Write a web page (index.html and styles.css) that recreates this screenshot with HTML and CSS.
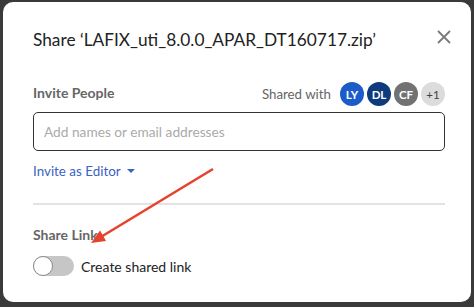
FILE: index.html
```html
<!DOCTYPE html>
<html>
  <head>
    <title>Share</title>
    <meta charset="UTF-8">
    <meta name="viewport" content="width=device-width, initial-scale=1.0">
    <link rel="stylesheet" href="styles.css">
  </head>
  <body>
    <div id="modal">
      <div class="header">
        <h1 class="title">Share ‘LAFIX_uti_8.0.0_APAR_DT160717.zip’</h1>
        <div class="close">
          <svg width="14" height="14" viewBox="0 0 14 14">
            <path d="M1 1 L13 13 M13 1 L1 13" stroke="#7a7a7a" stroke-width="1.8" fill="none"/>
          </svg>
        </div>
      </div>

      <div class="invite-row">
        <div class="label invite-label">Invite People</div>
        <div class="shared">
          <span class="shared-text">Shared with</span>
          <div class="avatar ly">LY</div>
          <div class="avatar dl">DL</div>
          <div class="avatar cf">CF</div>
          <div class="avatar more">+1</div>
        </div>
      </div>

      <div class="input">Add names or email addresses</div>

      <div class="role">Invite as Editor <span class="caret"></span></div>

      <div class="divider"></div>

      <div class="label link-label">Share Link</div>

      <div class="toggle-row">
        <div class="toggle"><div class="knob"></div></div>
        <span class="toggle-text">Create shared link</span>
      </div>
    </div>

    <!-- annotation arrow drawn over the dialog -->
    <svg class="arrow" width="474" height="307" viewBox="0 0 474 307">
      <line x1="213" y1="169" x2="100" y2="237.5" stroke="#e5432d" stroke-width="2.6"/>
      <polygon points="91,243 106,241 100,230.5" fill="#e5432d"/>
    </svg>
  </body>
</html>
```

FILE: styles.css
```css
* {
  box-sizing: border-box;
}

html, body {
  margin: 0;
  height: 100%;
  background-color: #3a3a3a;
  font-family: Lato, "Open Sans", sans-serif;
  overflow: hidden;
}

#modal {
  width: 468px;
  height: 300px;
  margin: 2px 0 0 3px;
  padding: 26px 26px 0 30px;
  background-color: white;
  border-radius: 10px;
  display: flex;
  flex-direction: column;
}

.header {
  display: flex;
  justify-content: space-between;
  align-items: flex-start;
}

.title {
  margin: 0;
  font-size: 17.3px;
  font-weight: 400;
  line-height: 24px;
  color: #222;
}

.close {
  margin: 0 -6px 0 0;
}

.invite-row {
  display: flex;
  justify-content: space-between;
  align-items: center;
  margin-top: 30px;
}

.label {
  font-size: 14px;
  font-weight: 700;
  color: #666;
}

.invite-label {
  margin-top: -3px;
}

.shared {
  display: flex;
  align-items: center;
  gap: 3px;
}

.shared-text {
  font-size: 13.3px;
  color: #666;
  margin-right: 6px;
}

.avatar {
  width: 24px;
  height: 24px;
  border-radius: 50%;
  display: flex;
  align-items: center;
  justify-content: center;
  font-size: 11.5px;
  font-weight: 700;
  color: white;
}

.ly { background-color: #1c5cc9; }
.dl { background-color: #0e3a7e; }
.cf { background-color: #727272; }

.more {
  background-color: #dcdcdc;
  color: #444;
  font-weight: 400;
}

.input {
  margin-top: 6px;
  height: 39px;
  border: 1px solid #333;
  border-radius: 5px;
  padding: 0 10px;
  display: flex;
  align-items: center;
  font-size: 13.7px;
  color: #aaa;
}

.role {
  margin-top: 12px;
  font-size: 13.4px;
  color: #3a63c5;
  display: flex;
  align-items: center;
}

.caret {
  margin-left: 6px;
  border-left: 4px solid transparent;
  border-right: 4px solid transparent;
  border-top: 4px solid #3a63c5;
}

.divider {
  margin-top: 24px;
  height: 2px;
  background-color: #e3e3e3;
}

.link-label {
  margin-top: 21px;
}

.toggle-row {
  display: flex;
  align-items: center;
  margin-top: 13px;
  gap: 7px;
}

.toggle {
  width: 41px;
  height: 20px;
  border-radius: 10px;
  background-color: #c6c6c6;
}

.knob {
  width: 20px;
  height: 20px;
  border-radius: 50%;
  background-color: white;
  border: 1px solid #8a8a8a;
}

.toggle-text {
  font-size: 14px;
  color: #222;
}

.arrow {
  position: absolute;
  left: 0;
  top: 0;
  pointer-events: none;
}
```
